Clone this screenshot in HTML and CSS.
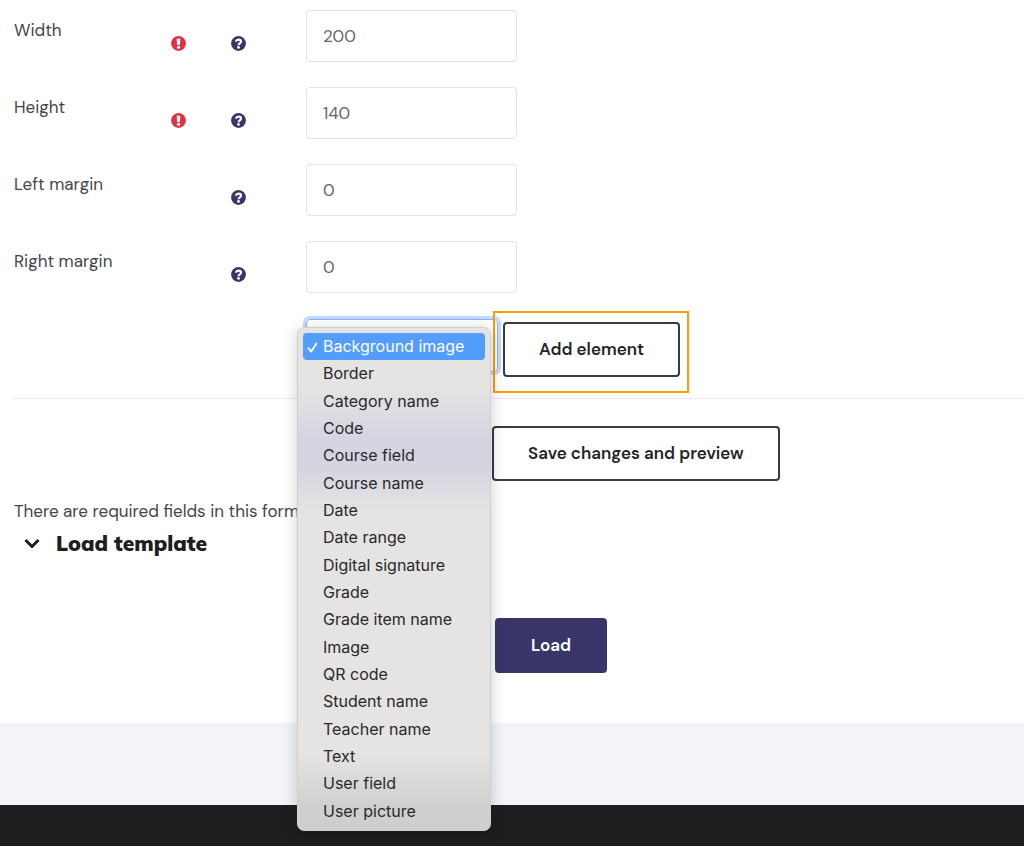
FILE: index.html
```html
<!DOCTYPE html>
<html lang="en">
<head>
<meta charset="utf-8">
<meta name="viewport" content="width=device-width, initial-scale=1">
<title>Edit certificate template</title>
<link rel="stylesheet" href="styles.css">
</head>
<body>
<svg class="symbols" aria-hidden="true">
  <symbol id="required" viewBox="0 0 512 512"><circle cx="256" cy="256" r="252" fill="currentColor"/><path fill="#fff" d="M194 92h124l-14 218h-96z"/><circle cx="256" cy="382" r="52" fill="#fff"/></symbol>
  <symbol id="help" viewBox="0 0 512 512"><circle cx="256" cy="256" r="252" fill="currentColor"/><path fill="none" stroke="#fff" stroke-width="74" d="M160 190c20-48 58-67 98-67 48 0 84 28 84 67 0 62-84 60-84 124"/><circle cx="256" cy="390" r="48" fill="#fff"/></symbol>
</svg>
<main class="page">
  <form class="form">
    <div class="row">
      <div class="row-head">
        <label class="label" for="width">Width</label>
        <svg class="icon icon-required" role="img" aria-label="Required"><use href="#required"/></svg>
        <button class="help" type="button" aria-label="Help with Width"><svg class="icon"><use href="#help"/></svg></button>
      </div>
      <input class="field" id="width" type="text" value="200">
    </div>
    <div class="row">
      <div class="row-head">
        <label class="label" for="height">Height</label>
        <svg class="icon icon-required" role="img" aria-label="Required"><use href="#required"/></svg>
        <button class="help" type="button" aria-label="Help with Height"><svg class="icon"><use href="#help"/></svg></button>
      </div>
      <input class="field" id="height" type="text" value="140">
    </div>
    <div class="row">
      <div class="row-head">
        <label class="label" for="left">Left margin</label>
        <button class="help" type="button" aria-label="Help with Left margin"><svg class="icon"><use href="#help"/></svg></button>
      </div>
      <input class="field" id="left" type="text" value="0">
    </div>
    <div class="row">
      <div class="row-head">
        <label class="label" for="right">Right margin</label>
        <button class="help" type="button" aria-label="Help with Right margin"><svg class="icon"><use href="#help"/></svg></button>
      </div>
      <input class="field" id="right" type="text" value="0">
    </div>
    <div class="row add-row">
      <div class="picker">
        <select class="select" aria-label="Element type"><option>Background image</option></select>
        <ul class="menu" role="listbox" aria-label="Element type">
          <li class="option selected" role="option" aria-selected="true"><svg class="check" viewBox="0 0 12 12" aria-hidden="true"><path d="M1.5 6.8 4.6 10.4 10.3 1.6"/></svg>Background image</li>
          <li class="option" role="option">Border</li>
          <li class="option" role="option">Category name</li>
          <li class="option" role="option">Code</li>
          <li class="option" role="option">Course field</li>
          <li class="option" role="option">Course name</li>
          <li class="option" role="option">Date</li>
          <li class="option" role="option">Date range</li>
          <li class="option" role="option">Digital signature</li>
          <li class="option" role="option">Grade</li>
          <li class="option" role="option">Grade item name</li>
          <li class="option" role="option">Image</li>
          <li class="option" role="option">QR code</li>
          <li class="option" role="option">Student name</li>
          <li class="option" role="option">Teacher name</li>
          <li class="option" role="option">Text</li>
          <li class="option" role="option">User field</li>
          <li class="option" role="option">User picture</li>
        </ul>
      </div>
      <div class="highlight"><button class="button" type="button">Add element</button></div>
    </div>
    <hr class="rule">
    <div class="save-row"><button class="button" type="submit">Save changes and preview</button></div>
    <p class="note">There are required fields in this form</p>
  </form>
  <section class="load">
    <h2 class="heading">
      <button class="toggle" type="button" aria-expanded="true"><svg class="chevron" viewBox="0 0 16 16" aria-hidden="true"><path d="M1.500 5 8 11.500 14.500 5"/></svg>Load template</button>
    </h2>
    <div class="load-row"><button class="button primary" type="button">Load</button></div>
  </section>
</main>
<div class="band"></div>
<footer class="footer"></footer>
</body>
</html>
```
FILE: styles.css
```css
* { box-sizing: border-box; }

body {
  margin: 0;
  min-height: 100vh;
  display: flex;
  flex-direction: column;
  overflow-x: hidden;
  background: #fff;
  color: #43464b;
  font: 17px/24px "DM Sans", "Open Sans", sans-serif;
}

button, input, select { font: inherit; color: inherit; }

.symbols { position: absolute; width: 0; height: 0; }

.page { padding: 10px 0 50px 14px; }

.form { display: flex; flex-direction: column; }

.row {
  display: grid;
  grid-template-columns: 292px 1fr;
  align-items: start;
  margin-bottom: 25px;
}

.row-head { display: flex; align-items: flex-start; padding-right: 60px; }
.label { flex: 1; padding-top: 8px; }

.icon { display: block; width: 15px; height: 15px; }
.icon-required { color: #e13244; margin: 26px 45px 0 0; }
.help {
  margin: 26px 0 0;
  padding: 0;
  border: 0;
  background: none;
  color: #383669;
}

.field {
  width: 211px;
  height: 52px;
  padding: 0 16px;
  border: 1px solid #e2e2e4;
  border-radius: 4px;
  background: #fff;
  color: #66676b;
}

.add-row {
  grid-template-columns: 187px auto;
  justify-content: start;
  margin: -7px 0 5px;
  padding-left: 292px;
}

.picker { position: relative; padding-top: 8px; }

.select {
  width: 192px;
  height: 53px;
  padding: 0 12px;
  border: 1px solid #84b6f5;
  border-radius: 4px;
  outline: 3px solid #c2dafb;
  background: #fff;
  appearance: none;
}

.menu {
  position: absolute;
  z-index: 2;
  top: 16px;
  left: -9px;
  display: grid;
  grid-auto-rows: 1fr;
  width: 194px;
  min-height: 504px;
  margin: 0;
  padding: 5px;
  list-style: none;
  border: 1px solid #cfced2;
  border-radius: 7px;
  background: linear-gradient(#e5e4e2 0 60px, #d6d4e1 110px 140px, #e5e4e2 185px 425px, #cfcfcf 480px);
  box-shadow: 0 3px 16px rgba(0, 0, 0, 0.2);
  color: #28292b;
  font: 16px/27px Inter, sans-serif;
}

.option { position: relative; padding-left: 20px; white-space: nowrap; }
.selected { border-radius: 4px; background: #539dff; color: #fff; }

.check {
  position: absolute;
  top: 9px;
  left: 4px;
  width: 11px;
  height: 11px;
  fill: none;
  stroke: #fff;
  stroke-width: 2;
  stroke-linecap: round;
  stroke-linejoin: round;
}

.highlight {
  position: relative;
  z-index: 1;
  padding: 9px 7px 14px 8px;
  border: 2px solid #ff9a0a;
}

.button {
  display: block;
  height: 55px;
  padding: 0 34px 2px;
  border: 2px solid #3a3b40;
  border-radius: 4px;
  background: #fff;
  color: #242528;
  font-weight: 600;
}

.rule {
  width: 100%;
  margin: 0;
  border: 0;
  border-top: 1px solid #ececee;
}

.save-row { padding: 27px 0 0 478px; }
.note { margin: 18px 0 0; }

.heading { margin: 8px 0 0; }
.toggle {
  display: flex;
  align-items: center;
  gap: 16px;
  padding: 0 10px;
  border: 0;
  background: none;
  color: #1d1e20;
  font: 900 21px/24px Mulish, "Open Sans", sans-serif;
}
.chevron {
  width: 16px;
  height: 16px;
  fill: none;
  stroke: currentColor;
  stroke-width: 3;
  stroke-linejoin: round;
}

.load-row { padding: 63px 0 0 481px; }
.primary { border-color: #383669; background: #383669; color: #fff; }

.band { height: 82px; background: #f3f4f7; }
.footer { flex: 1; min-height: 40px; background: #1d1e20; }
```
